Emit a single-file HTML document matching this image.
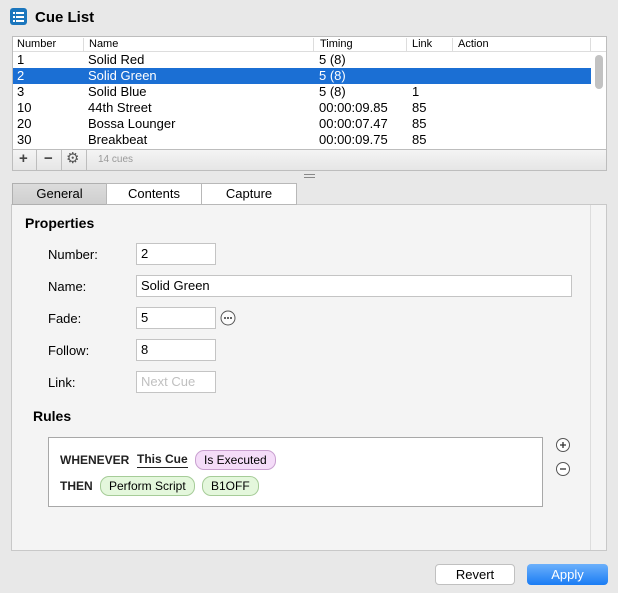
<!DOCTYPE html><html><head><style>
*{box-sizing:border-box;margin:0;padding:0}
body{width:618px;height:593px;background:#e8e8e8;font-family:"Liberation Sans",sans-serif;font-size:13px;color:#000;position:relative;overflow:hidden}
.a{position:absolute}
.t{position:absolute;white-space:nowrap;line-height:16px}
.f{position:absolute;background:#fff;border:1px solid #c4c4c4;height:22px;padding-left:4px;line-height:20px;font-size:13px}
.pill{position:absolute;height:20px;border-radius:9px;line-height:18px;padding:0 8px;font-size:12px}
.sep{position:absolute;top:38px;width:1px;height:13px;background:#ddd}
</style></head><body>
<svg class="a" style="left:10px;top:8px" width="17" height="17"><rect x="0" y="0" width="17" height="17" rx="3" fill="#1b76bd"/><g fill="#fff"><rect x="3" y="4" width="2" height="2"/><rect x="3" y="8" width="2" height="2"/><rect x="3" y="12" width="2" height="2"/><rect x="6" y="4" width="8" height="2"/><rect x="6" y="8" width="8" height="2"/><rect x="6" y="12" width="8" height="2"/></g></svg>
<div class="t" style="left:35px;top:9px;font-weight:bold;font-size:15px;line-height:18px">Cue List</div>
<div class="a" style="left:12px;top:36px;width:595px;height:135px;background:#fff;border:1px solid #bdbdbd"></div>
<div class="a" style="left:13px;top:51px;width:593px;height:1px;background:#ddd"></div>
<div class="sep" style="left:83px"></div><div class="sep" style="left:313px"></div><div class="sep" style="left:406px"></div><div class="sep" style="left:452px"></div><div class="sep" style="left:590px"></div>
<div class="t" style="left:17px;top:37px;font-size:11px;line-height:14px">Number</div>
<div class="t" style="left:89px;top:37px;font-size:11px;line-height:14px">Name</div>
<div class="t" style="left:320px;top:37px;font-size:11px;line-height:14px">Timing</div>
<div class="t" style="left:412px;top:37px;font-size:11px;line-height:14px">Link</div>
<div class="t" style="left:458px;top:37px;font-size:11px;line-height:14px">Action</div>
<div class="a" style="left:13px;top:68px;width:578px;height:16px;background:#1b6fd4"></div>
<div class="a" style="left:595px;top:55px;width:8px;height:34px;background:#c2c2c2;border-radius:4px"></div>
<div class="t" style="left:17px;top:52px">1</div><div class="t" style="left:88px;top:52px">Solid Red</div><div class="t" style="left:319px;top:52px">5 (8)</div>
<div class="t" style="left:17px;top:68px;color:#fff">2</div><div class="t" style="left:88px;top:68px;color:#fff">Solid Green</div><div class="t" style="left:319px;top:68px;color:#fff">5 (8)</div>
<div class="t" style="left:17px;top:84px">3</div><div class="t" style="left:88px;top:84px">Solid Blue</div><div class="t" style="left:319px;top:84px">5 (8)</div><div class="t" style="left:412px;top:84px">1</div>
<div class="t" style="left:17px;top:100px">10</div><div class="t" style="left:88px;top:100px">44th Street</div><div class="t" style="left:319px;top:100px">00:00:09.85</div><div class="t" style="left:412px;top:100px">85</div>
<div class="t" style="left:17px;top:116px">20</div><div class="t" style="left:88px;top:116px">Bossa Lounger</div><div class="t" style="left:319px;top:116px">00:00:07.47</div><div class="t" style="left:412px;top:116px">85</div>
<div class="t" style="left:17px;top:132px">30</div><div class="t" style="left:88px;top:132px">Breakbeat</div><div class="t" style="left:319px;top:132px">00:00:09.75</div><div class="t" style="left:412px;top:132px">85</div>
<div class="a" style="left:12px;top:149px;width:595px;height:22px;background:linear-gradient(#f4f4f4,#e6e6e6);border:1px solid #bdbdbd"></div>
<div class="a" style="left:36px;top:150px;width:1px;height:20px;background:#bdbdbd"></div>
<div class="a" style="left:61px;top:150px;width:1px;height:20px;background:#bdbdbd"></div>
<div class="a" style="left:86px;top:150px;width:1px;height:20px;background:#bdbdbd"></div>
<div class="t" style="left:19px;top:151px;font-size:15px;font-weight:bold;color:#444">+</div>
<div class="t" style="left:44px;top:151px;font-size:15px;font-weight:bold;color:#444">−</div>
<div class="t" style="left:66px;top:151px;font-size:15px;color:#555">⚙</div>
<div class="t" style="left:98px;top:152px;font-size:10px;color:#999">14 cues</div>
<div class="a" style="left:304px;top:174px;width:11px;height:1px;background:#888"></div>
<div class="a" style="left:304px;top:177px;width:11px;height:1px;background:#888"></div>
<div class="a" style="left:11px;top:204px;width:596px;height:347px;background:#f4f4f4;border:1px solid #c8c8c8"></div>
<div class="a" style="left:590px;top:205px;width:16px;height:345px;border-left:1px solid #ddd;background:#f4f4f4"></div>
<div class="a" style="left:12px;top:183px;width:95px;height:22px;background:linear-gradient(#dcdcdc,#cfcfcf);border:1px solid #b0b0b0;text-align:center;line-height:20px">General</div>
<div class="a" style="left:106px;top:183px;width:96px;height:22px;background:#fff;border:1px solid #b8b8b8;text-align:center;line-height:20px">Contents</div>
<div class="a" style="left:201px;top:183px;width:96px;height:22px;background:#fff;border:1px solid #b8b8b8;text-align:center;line-height:20px">Capture</div>
<div class="t" style="left:25px;top:215px;font-weight:bold;font-size:14px">Properties</div>
<div class="t" style="left:48px;top:247px">Number:</div><div class="f" style="left:136px;top:243px;width:80px">2</div>
<div class="t" style="left:48px;top:279px">Name:</div><div class="f" style="left:136px;top:275px;width:436px">Solid Green</div>
<div class="t" style="left:48px;top:311px">Fade:</div><div class="f" style="left:136px;top:307px;width:80px">5</div>
<svg class="a" style="left:220px;top:310px" width="16" height="16"><circle cx="8" cy="8" r="7" fill="#fbfbfb" stroke="#555"/><circle cx="5" cy="8" r="1" fill="#333"/><circle cx="8" cy="8" r="1" fill="#333"/><circle cx="11" cy="8" r="1" fill="#333"/></svg>
<div class="t" style="left:48px;top:343px">Follow:</div><div class="f" style="left:136px;top:339px;width:80px">8</div>
<div class="t" style="left:48px;top:375px">Link:</div><div class="f" style="left:136px;top:371px;width:80px;color:#c0c0c0">Next Cue</div>
<div class="t" style="left:33px;top:408px;font-weight:bold;font-size:14px">Rules</div>
<div class="a" style="left:48px;top:437px;width:495px;height:70px;background:#fff;border:1px solid #a8a8a8"></div>
<div class="t" style="left:60px;top:452px;font-size:12px;font-weight:bold;color:#222">WHENEVER</div>
<div class="t" style="left:137px;top:452px;font-size:12px;font-weight:bold;color:#222;border-bottom:1px solid #222;line-height:15px">This Cue</div>
<div class="pill" style="left:195px;top:450px;background:#f4dcf8;border:1px solid #c9a0d0">Is Executed</div>
<div class="t" style="left:60px;top:478px;font-size:12px;font-weight:bold;color:#222">THEN</div>
<div class="pill" style="left:100px;top:476px;background:#e4f7dc;border:1px solid #a6cc98">Perform Script</div>
<div class="pill" style="left:202px;top:476px;background:#e4f7dc;border:1px solid #a6cc98">B1OFF</div>
<svg class="a" style="left:555px;top:437px" width="16" height="42"><circle cx="8" cy="8" r="6.5" fill="#fff" stroke="#555"/><path d="M5 8h6M8 5v6" stroke="#333" stroke-width="1.3"/><circle cx="8" cy="32" r="6.5" fill="#fff" stroke="#555"/><path d="M5 32h6" stroke="#333" stroke-width="1.3"/></svg>
<div class="a" style="left:435px;top:564px;width:80px;height:21px;background:#fff;border:1px solid #c0c0c0;border-radius:4px;text-align:center;line-height:19px">Revert</div>
<div class="a" style="left:527px;top:564px;width:81px;height:21px;background:linear-gradient(#6cb0fb,#1a7cf4);border-radius:4px;text-align:center;line-height:21px;color:#fff">Apply</div>
</body></html>
